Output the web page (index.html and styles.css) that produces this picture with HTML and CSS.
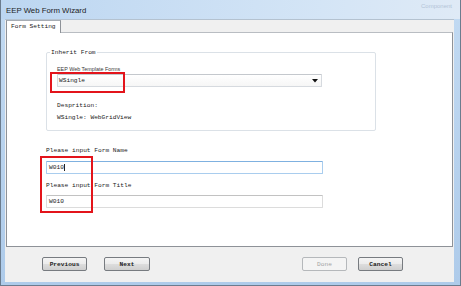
FILE: index.html
```html
<!DOCTYPE html>
<html lang="en">
<head>
    <meta charset="UTF-8">
    <title>EEP Web Form Wizard</title>
    <link rel="stylesheet" href="styles.css">
</head>
<body>
    <div class="window">
        <div class="titlebar">
            <span class="title">EEP Web Form Wizard</span>
            <span class="ghost">Component</span>
        </div>
        <div class="client">
            <div class="tabstrip">
                <div class="tab">Form Setting</div>
            </div>
            <div class="panel">
                <div class="group">
                    <span class="group-title">Inherit From</span>
                    <div class="small-label">EEP Web Template Forms</div>
                    <div class="combo">
                        <span>WSingle</span>
                        <svg class="arrow" width="6" height="4" viewBox="0 0 6 4"><path d="M0 0H6L3 3.5Z" fill="#111"/></svg>
                    </div>
                    <div class="desc-label">Desprition:</div>
                    <div class="desc-text">WSingle: WebGridView</div>
                </div>
                <div class="field-label first">Please input Form Name</div>
                <div class="input focused">W010<span class="caret"></span></div>
                <div class="field-label">Please input Form Title</div>
                <div class="input">W010</div>
            </div>
            <div class="buttonbar">
                <button class="btn prev">Previous</button>
                <button class="btn next">Next</button>
                <button class="btn done" disabled>Done</button>
                <button class="btn cancel">Cancel</button>
            </div>
        </div>
        <div class="mark mark-template"></div>
        <div class="mark mark-inputs"></div>
    </div>
</body>
</html>
```

FILE: styles.css
```css
html, body {
    margin: 0;
    padding: 0;
    background: #ffffff;
}
.window {
    position: relative;
    box-sizing: border-box;
    width: 461px;
    height: 286px;
    display: flex;
    flex-direction: column;
    background: linear-gradient(to bottom, #c2daf2, #aecbea);
    border: 1px solid #6b7c8e;
    border-top: none;
    font-family: "Liberation Mono", monospace;
    font-size: 6.2px;
    color: #1a1a1a;
}
.titlebar {
    height: 19px;
    display: flex;
    align-items: center;
    padding: 0 8px 0 5px;
    background: linear-gradient(to right, #bcd6f1, #d4e5f6 70%, #dfeaf6);
}
.title {
    font-family: "Liberation Sans", Arial, sans-serif;
    font-size: 7.8px;
    color: #1c1c1c;
    margin-top: 2px;
}
.ghost {
    margin-left: auto;
    margin-top: -7px;
    font-family: "Liberation Sans", Arial, sans-serif;
    font-size: 6px;
    color: #b3c4d6;
}
.client {
    flex: 1;
    margin: 0 6px 3px 4px;
    display: flex;
    flex-direction: column;
    background: #f0f0f0;
    border-top: 1px solid #b4c2d0;
}
.tabstrip {
    height: 12px;
    display: flex;
    align-items: flex-start;
    padding-left: 1px;
}
.tab {
    position: relative;
    z-index: 1;
    box-sizing: border-box;
    height: 13px;
    padding: 0 4px;
    line-height: 12px;
    background: #ffffff;
    border: 1px solid #8e9298;
    border-bottom: none;
    border-top-color: #a6acb3;
}
.panel {
    box-sizing: border-box;
    height: 215px;
    margin: 0 1px;
    background: #ffffff;
    border: 1px solid #8e9298;
    border-top-color: #b9bdc2;
    display: flex;
    flex-direction: column;
    align-items: flex-start;
    padding-left: 39px;
}
.group {
    box-sizing: border-box;
    width: 330px;
    height: 79px;
    margin-top: 19px;
    padding-left: 10px;
    border: 1px solid #dbe1e7;
    border-radius: 2px;
    display: flex;
    flex-direction: column;
    align-items: flex-start;
}
.group-title {
    display: block;
    margin: -4px 0 0 -7px;
    padding: 0 1px;
    line-height: 7px;
    background: #ffffff;
}
.small-label {
    margin-top: 9px;
    line-height: 8px;
    font-family: "Liberation Sans", Arial, sans-serif;
    font-size: 5.4px;
    color: #3a3a3a;
}
.combo {
    box-sizing: border-box;
    width: 265px;
    height: 13px;
    margin-top: 1px;
    padding: 0 3px 0 1px;
    display: flex;
    align-items: center;
    justify-content: space-between;
    border: 1px solid #d6dadf;
    border-top-color: #c4c8cd;
    border-radius: 1px;
    background: linear-gradient(to bottom, #ffffff, #f6f6f6);
}
.arrow {
    display: block;
}
.desc-label {
    margin-top: 15px;
    line-height: 8px;
}
.desc-text {
    margin-top: 4px;
    line-height: 8px;
}
.field-label {
    margin-top: 8px;
    line-height: 8px;
}
.field-label.first {
    margin-top: 16px;
}
.input {
    box-sizing: border-box;
    width: 277px;
    height: 13px;
    margin-top: 6px;
    padding-left: 2px;
    display: flex;
    align-items: center;
    border: 1px solid #dcdcdc;
    border-top-color: #c2c2c2;
    border-radius: 1px;
}
.input + .field-label {
    margin-top: 8px;
}
.field-label + .input:last-child {
    margin-top: 5px;
}
.input.focused {
    border-color: #a9cdee;
    border-top-color: #7fb1e0;
}
.caret {
    display: inline-block;
    width: 0;
    height: 7px;
    margin-left: 0.5px;
    border-left: 1px solid #222;
}
.buttonbar {
    flex: 1;
    display: flex;
    align-items: flex-start;
    padding: 10px 0 0 37px;
}
.btn {
    box-sizing: border-box;
    width: 45px;
    height: 14px;
    padding: 0;
    font-family: "Liberation Mono", monospace;
    font-size: 6.2px;
    font-weight: bold;
    color: #1a1a1a;
    border: 1px solid #777b80;
    border-radius: 2px;
    background: linear-gradient(to bottom, #f4f4f4 0%, #ebebeb 50%, #dddddd 51%, #cfcfcf 100%);
}
.btn.next {
    width: 46px;
    margin-left: 17px;
}
.btn.done {
    margin-left: 152px;
    font-weight: normal;
    color: #a3a3a3;
    border-color: #b5b8bb;
    background: #f4f4f4;
}
.btn.cancel {
    margin-left: 11px;
}
.mark {
    position: absolute;
    box-sizing: border-box;
    border: 2px solid #e3141b;
}
.mark-template {
    left: 49px;
    top: 72px;
    width: 75px;
    height: 21px;
}
.mark-inputs {
    left: 39px;
    top: 156px;
    width: 53px;
    height: 57px;
}
```
